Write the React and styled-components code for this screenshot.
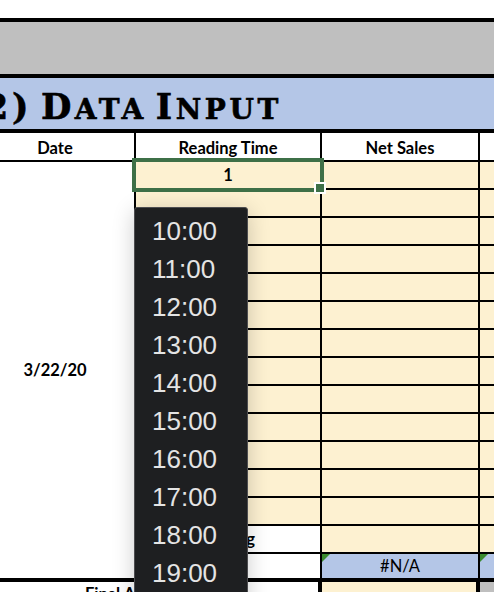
import React from "react";
import styled, { createGlobalStyle } from "styled-components";

const Global = createGlobalStyle`
  html, body { margin: 0; padding: 0; background: #fff; overflow: hidden; }
  #root { width: 494px; height: 592px; }
`;

const YELLOW = "#fdf1d1";
const BLUE = "#b4c6e7";
const GRAY = "#bfbfbf";
const GREEN = "#3e7047";

const Page = styled.div`
  position: relative;
  width: 494px;
  height: 592px;
  overflow: hidden;
  background: #fff;
  display: flex;
  flex-direction: column;
  font-family: "Lato", "Liberation Sans", sans-serif;
`;

const TopGap = styled.div`
  height: 18px;
  flex: none;
`;

const GrayBand = styled.div`
  flex: none;
  height: 52px;
  background: ${GRAY};
  border-top: 4px solid #000;
  border-bottom: 4px solid #000;
`;

const TitleBand = styled.div`
  flex: none;
  height: 51px;
  background: ${BLUE};
  border-bottom: 4px solid #000;
  display: flex;
  align-items: center;
  overflow: hidden;
`;

const Title = styled.h1`
  margin: 0 0 0 -16px;
  font-family: "DejaVu Serif", "Liberation Serif", serif;
  font-weight: 700;
  font-size: 35px;
  letter-spacing: 3.6px;
  word-spacing: -7px;
  white-space: nowrap;
  color: #000;
  line-height: 1;
  padding-top: 5px;
  -webkit-text-stroke: 0.6px #000;
`;

const Small = styled.span`
  font-size: 28px;
`;

const Grid = styled.div`
  flex: none;
  margin-left: -24px;
  display: grid;
  grid-template-columns: 158px 184px 156px 60px;
  grid-template-rows: 27px repeat(14, 26px) 24px;
  gap: 2px;
  background: #000;
  width: 564px;
`;

const Cell = styled.div`
  position: relative;
  background: ${(p) => p.$bg || "#fff"};
  display: flex;
  align-items: center;
  justify-content: center;
  padding-top: ${(p) => (p.$head ? "2px" : "0")};
  font-size: 16.5px;
  font-weight: ${(p) => (p.$regular ? 400 : 700)};
  color: #000;
  white-space: nowrap;
  overflow: hidden;
  ${(p) => p.$span && `grid-row: ${p.$span};`}
  ${(p) =>
    p.$err &&
    `&::before {
      content: "";
      position: absolute;
      left: 0;
      top: 0;
      border-top: 8px solid #3a8a2e;
      border-right: 8px solid transparent;
    }`}
`;

const FinalRow = styled.div`
  flex: none;
  margin-left: -24px;
  display: grid;
  grid-template-columns: 342px 154px 60px;
  column-gap: 4px;
  background: #000;
  border-top: 4px solid #000;
  height: 40px;
  width: 564px;
`;

const FinalCell = styled.div`
  background: ${(p) => p.$bg || "#fff"};
  font-size: 16.5px;
  font-weight: 700;
  text-align: center;
  padding-top: 2px;
  white-space: nowrap;
`;

const Selection = styled.div`
  position: absolute;
  left: 132px;
  top: 158px;
  width: 192px;
  height: 34px;
  box-sizing: border-box;
  border: 4px solid ${GREEN};
`;

const Handle = styled.div`
  position: absolute;
  left: 314px;
  top: 182px;
  width: 8px;
  height: 8px;
  background: ${GREEN};
  border: 2px solid #fff;
`;

const Dropdown = styled.ul`
  position: absolute;
  left: 134px;
  top: 207px;
  width: 114px;
  height: 420px;
  box-sizing: border-box;
  margin: 0;
  padding: 4px 0 0 17px;
  list-style: none;
  background: #1e1f21;
  border: 1px solid #4d4d50;
  border-radius: 3px;
  box-shadow: 0 4px 22px rgba(0, 0, 0, 0.2);
`;

const Option = styled.li`
  height: 38px;
  line-height: 38px;
  font-family: "Liberation Sans", "Arial", sans-serif;
  font-size: 26px;
  color: #e4e4e4;
`;

const times = ["10:00", "11:00", "12:00", "13:00", "14:00", "15:00", "16:00", "17:00", "18:00", "19:00"];

export default function App() {
  const yellowRows = Array.from({ length: 13 }, (_, i) => i);
  return (
    <>
      <Global />
      <Page>
        <TopGap />
        <GrayBand />
        <TitleBand>
          <Title>
            2) D<Small>ATA</Small> I<Small>NPUT</Small>
          </Title>
        </TitleBand>
        <Grid>
          <Cell $head>Date</Cell>
          <Cell $head>Reading Time</Cell>
          <Cell $head>Net Sales</Cell>
          <Cell $head />
          <Cell $span="2 / span 15">3/22/20</Cell>
          {yellowRows.map((i) => (
            <React.Fragment key={i}>
              <Cell $bg={YELLOW}>{i === 0 ? "1" : ""}</Cell>
              <Cell $bg={YELLOW} />
              <Cell $bg={YELLOW} />
            </React.Fragment>
          ))}
          <Cell>Closing</Cell>
          <Cell $bg={YELLOW} />
          <Cell $bg={YELLOW} />
          <Cell />
          <Cell $bg={BLUE} $regular $err>#N/A</Cell>
          <Cell $bg={BLUE} $regular $err />
        </Grid>
        <FinalRow>
          <FinalCell>Final Adjustment</FinalCell>
          <FinalCell $bg={YELLOW} />
          <FinalCell $bg={GRAY} />
        </FinalRow>
        <Selection />
        <Handle />
        <Dropdown>
          {times.map((t) => (
            <Option key={t}>{t}</Option>
          ))}
        </Dropdown>
      </Page>
    </>
  );
}
